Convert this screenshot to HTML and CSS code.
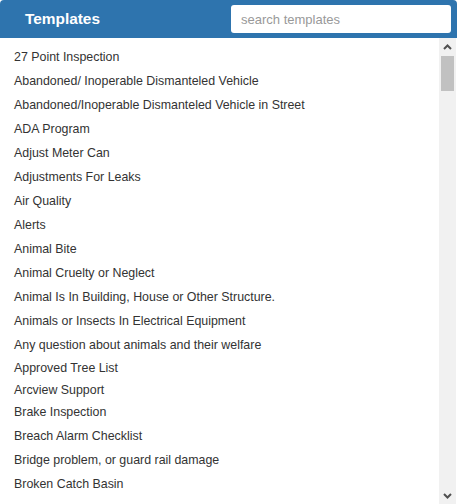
FILE: index.html
```html
<!DOCTYPE html>
<html>
<head>
<meta charset="utf-8">
<link rel="stylesheet" href="styles.css">
</head>
<body>
<div class="panel">
  <div class="header">
    <div class="title">Templates</div>
    <input class="search" type="text" placeholder="search templates">
  </div>
  <div class="body">
    <ul class="list">
      <li>27 Point Inspection</li>
      <li>Abandoned/ Inoperable Dismanteled Vehicle</li>
      <li>Abandoned/Inoperable Dismanteled Vehicle in Street</li>
      <li>ADA Program</li>
      <li>Adjust Meter Can</li>
      <li>Adjustments For Leaks</li>
      <li>Air Quality</li>
      <li>Alerts</li>
      <li>Animal Bite</li>
      <li>Animal Cruelty or Neglect</li>
      <li>Animal Is In Building, House or Other Structure.</li>
      <li>Animals or Insects In Electrical Equipment</li>
      <li>Any question about animals and their welfare</li>
      <li class="short">Approved Tree List</li>
      <li class="shorter">Arcview Support</li>
      <li>Brake Inspection</li>
      <li>Breach Alarm Checklist</li>
      <li>Bridge problem, or guard rail damage</li>
      <li>Broken Catch Basin</li>
    </ul>
    <div class="scrollbar">
      <div class="sb-btn">
        <svg width="9" height="6" viewBox="0 0 9 6"><path d="M1 5 L4.5 1.5 L8 5" fill="none" stroke="#505050" stroke-width="2"/></svg>
      </div>
      <div class="sb-thumb"></div>
      <div class="sb-track"></div>
      <div class="sb-btn">
        <svg width="9" height="6" viewBox="0 0 9 6"><path d="M1 1 L4.5 4.5 L8 1" fill="none" stroke="#505050" stroke-width="2"/></svg>
      </div>
    </div>
  </div>
</div>
</body>
</html>
```

FILE: styles.css
```css
html, body {
  margin: 0;
  padding: 0;
  background: #ffffff;
}
body {
  font-family: "Liberation Sans", Arial, sans-serif;
  width: 457px;
  height: 504px;
  overflow: hidden;
}
.panel {
  display: flex;
  flex-direction: column;
  height: 504px;
}
.header {
  height: 38px;
  flex: none;
  background: #2e74ae;
  border-radius: 4px 4px 0 0;
  display: flex;
  align-items: center;
  justify-content: space-between;
  padding: 0 6px 0 25px;
  box-sizing: border-box;
}
.title {
  color: #ffffff;
  font-weight: bold;
  font-size: 15.4px;
}
.search {
  width: 220px;
  height: 28px;
  box-sizing: border-box;
  border: none;
  border-radius: 3px;
  background: #ffffff;
  padding: 0 10px;
  font-family: "Liberation Sans", Arial, sans-serif;
  font-size: 13px;
  color: #333;
  outline: none;
}
.search::placeholder {
  color: #999999;
}
.body {
  flex: 1;
  display: flex;
  min-height: 0;
}
.list {
  flex: 1;
  list-style: none;
  margin: 0;
  padding: 7px 0 0 14px;
  overflow: hidden;
}
.list li {
  height: 24px;
  line-height: 24px;
  font-size: 12.4px;
  color: #333333;
  white-space: nowrap;
}
.list li.short {
  height: 23px;
  line-height: 23px;
}
.list li.shorter {
  height: 20px;
  line-height: 20px;
}
.scrollbar {
  width: 17px;
  flex: none;
  margin-right: 1px;
  background: #f1f1f1;
  display: flex;
  flex-direction: column;
}
.sb-btn {
  height: 17px;
  flex: none;
  display: flex;
  align-items: center;
  justify-content: center;
}
.sb-thumb {
  height: 35px;
  margin: 1px 2px 0 2px;
  background: #c1c1c1;
  flex: none;
}
.sb-track {
  flex: 1;
}
```
